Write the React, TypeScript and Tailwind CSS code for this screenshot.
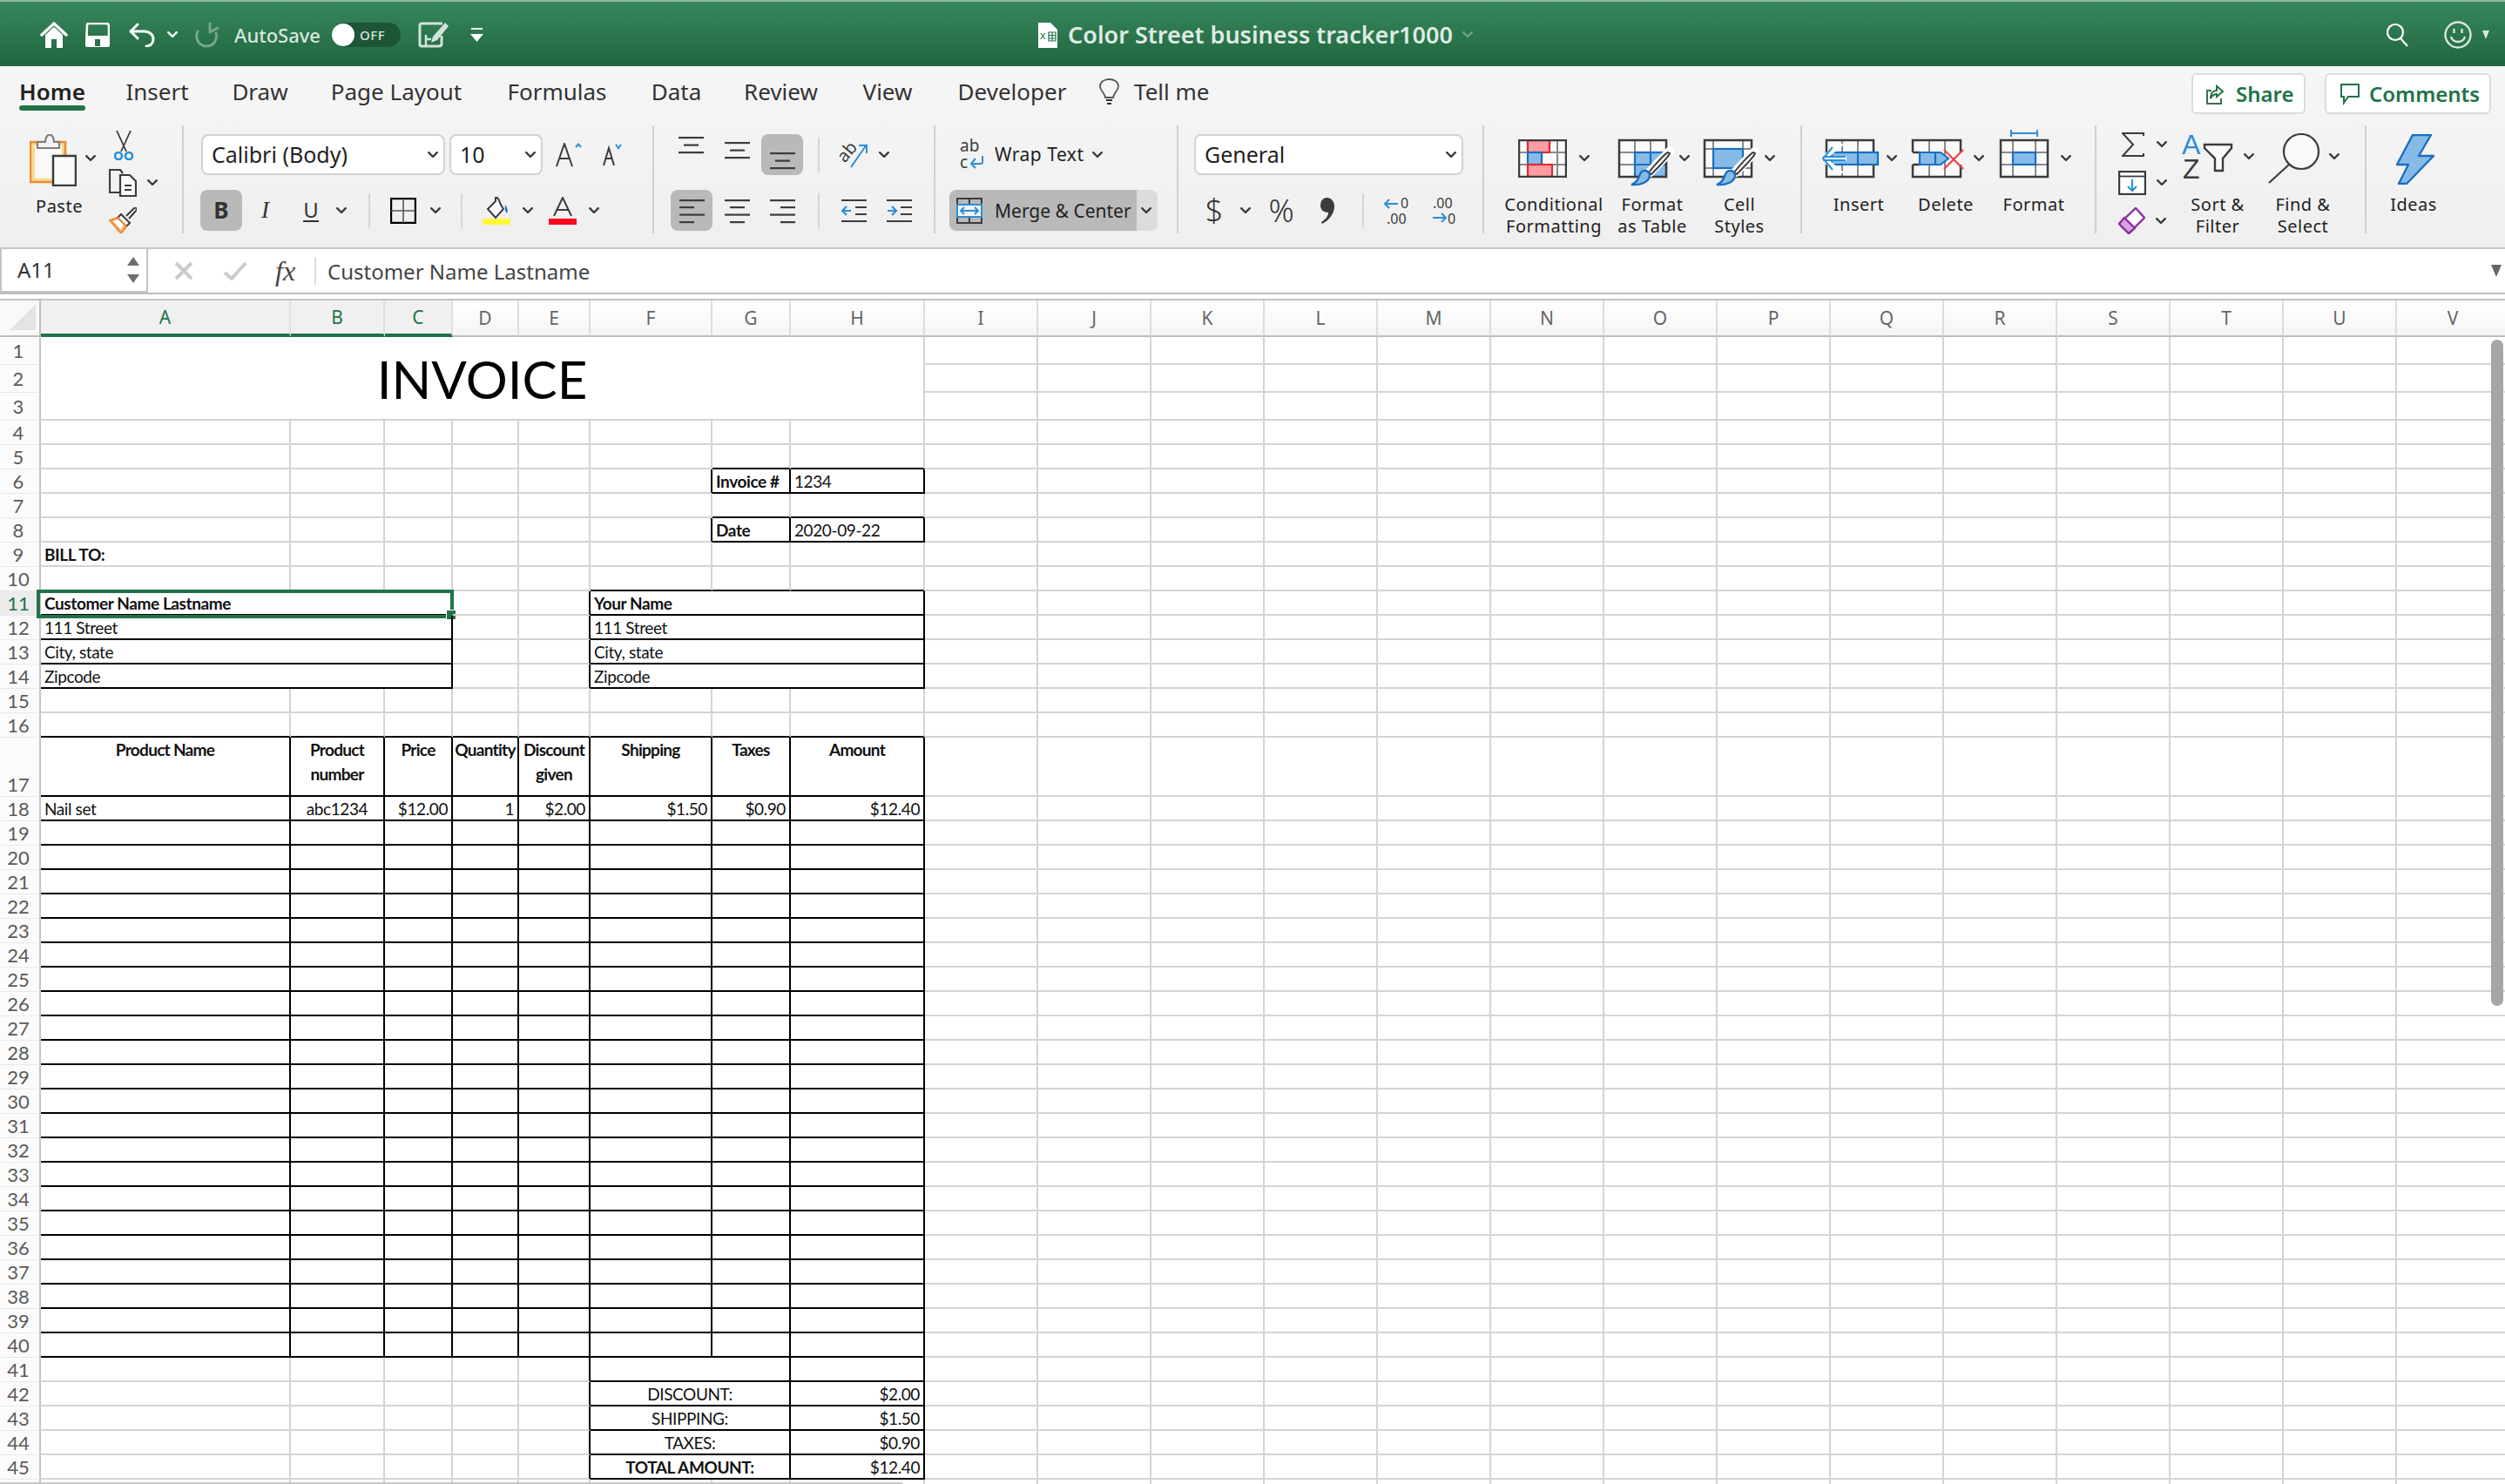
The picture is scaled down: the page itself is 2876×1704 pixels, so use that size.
import React from 'react';

const DARK = '#3c3c3c';
const BLUE = '#1a6fc0';
const LBLUE = '#86bbe8';
const SKY = '#2a8fd8';
const GRAY = '#8a8a8a';

const Chev = ({ className = '', color = DARK }: { className?: string; color?: string }) => (
  <svg viewBox="0 0 12 8" className={`w-[12px] h-[8px] shrink-0 ${className}`}>
    <path d="M1.2 1.2 L6 6 L10.8 1.2" fill="none" stroke={color} strokeWidth="2.4" strokeLinecap="round" strokeLinejoin="round" />
  </svg>
);

const Brush = () => (
  <g>
    <path d="M59 14 L36 38" stroke="#fff" strokeWidth="11" strokeLinecap="round" />
    <path d="M57 15 C54 16 41 30 35 38 L38 40 C45 33 58 20 59 16 Z" fill="#fff" stroke={DARK} strokeWidth="2" />
    <path d="M15 52 C26 53 35 49 36 42 C36 36 29 34 26 38 C23 43 23 49 15 52 Z" fill={LBLUE} stroke={BLUE} strokeWidth="2.4" />
  </g>
);

const Outer = ({ w = 56 }: { w?: number }) => <rect x="1" y="1" width={w - 2} height="42" fill="none" stroke={DARK} strokeWidth="2.5" />;

const CondIcon = () => (
  <svg viewBox="0 0 56 44" className="w-[56px] h-[44px]">
    <rect x="1" y="1" width="54" height="42" fill="#fafafa" />
    <path d="M45 0 V44 M0 15 H56 M0 29 H56 M11 0 V44" stroke={GRAY} strokeWidth="2" />
    <rect x="11" y="1" width="25" height="14" fill="#ff9da5" stroke="#e02b2b" strokeWidth="2.2" />
    <rect x="11" y="15" width="16" height="14" fill={LBLUE} stroke={BLUE} strokeWidth="2.2" />
    <rect x="11" y="29" width="28" height="14" fill="#ff9da5" stroke="#e02b2b" strokeWidth="2.2" />
    <Outer />
  </svg>
);

const TableIcon = () => (
  <svg viewBox="0 0 62 54" className="w-[62px] h-[54px] overflow-visible">
    <rect x="1" y="1" width="54" height="42" fill="#fafafa" />
    <path d="M19 0 V44 M37 0 V44 M0 15 H56 M0 29 H56" stroke={GRAY} strokeWidth="2" />
    <rect x="19" y="15" width="36" height="28" fill={LBLUE} stroke={BLUE} strokeWidth="2.2" />
    <path d="M37 15 V44 M19 29 H56" stroke={BLUE} strokeWidth="2.2" />
    <Outer />
    <Brush />
  </svg>
);

const CellStyleIcon = () => (
  <svg viewBox="0 0 62 54" className="w-[62px] h-[54px] overflow-visible">
    <rect x="1" y="1" width="54" height="42" fill="#fafafa" />
    <path d="M11 0 V44 M45 0 V44 M0 11 H56 M0 33 H56" stroke={GRAY} strokeWidth="2" />
    <rect x="11" y="11" width="34" height="22" fill={LBLUE} stroke={BLUE} strokeWidth="2.2" />
    <Outer />
    <Brush />
  </svg>
);

const InsertIcon = () => (
  <svg viewBox="0 0 62 44" className="w-[62px] h-[44px] overflow-visible">
    <rect x="1" y="1" width="54" height="42" fill="#fafafa" />
    <path d="M19 0 V44 M37 0 V44 M0 15 H56 M0 29 H56" stroke={GRAY} strokeWidth="2" />
    <Outer />
    <rect x="7" y="15" width="53" height="14" fill={LBLUE} stroke={BLUE} strokeWidth="2.2" />
    <path d="M37 15 V29" stroke={BLUE} strokeWidth="2.2" />
    <path d="M-3 22 L14 8 H5 M-3 22 L14 36 H5 M-3 22 H24" fill="none" stroke="#fff" strokeWidth="6" />
    <path d="M8 9 L-3 22 L8 35 M-3 20 H23 M-3 24 H23" fill="none" stroke={SKY} strokeWidth="2" />
  </svg>
);

const DeleteIcon = () => (
  <svg viewBox="0 0 62 44" className="w-[62px] h-[44px] overflow-visible">
    <rect x="1" y="1" width="54" height="42" fill="#fafafa" />
    <path d="M19 0 V44 M37 0 V44" stroke={GRAY} strokeWidth="2" />
    <path d="M0 15 V1 H55 V15 M0 29 V43 H55 V29 M0 15 H8 M0 29 H8" fill="none" stroke={DARK} strokeWidth="2.5" />
    <path d="M8 15 H32 L41 22 L32 29 H8 Z" fill={LBLUE} stroke={BLUE} strokeWidth="2.2" />
    <path d="M26 15 V29" stroke={BLUE} strokeWidth="2.2" />
    <path d="M36 12 L58 34 M58 12 L36 34" stroke="#f04040" strokeWidth="2.2" />
  </svg>
);

const FormatIcon = () => (
  <svg viewBox="0 0 56 44" className="w-[56px] h-[44px] overflow-visible">
    <rect x="1" y="1" width="54" height="42" fill="#fafafa" />
    <path d="M15 0 V44 M41 0 V44 M0 15 H56 M0 29 H56" stroke={GRAY} strokeWidth="2" />
    <rect x="15" y="15" width="26" height="14" fill={LBLUE} stroke={BLUE} strokeWidth="2.2" />
    <Outer />
    <path d="M13 -7 H43 M13 -11 V-3 M43 -11 V-3" stroke={SKY} strokeWidth="2" />
  </svg>
);

const Lines = ({ ys, w = 29, anchor = 'left' }: { ys: number[]; w?: number; anchor?: 'left' | 'center' | 'right' }) => (
  <svg viewBox="0 0 29 30" className="w-[29px] h-[30px]">
    {ys.map((y, i) => {
      const len = i % 2 === 1 ? 17 : w;
      const x = anchor === 'left' ? 0 : anchor === 'right' ? 29 - len : (29 - len) / 2;
      return <rect key={i} x={x} y={y} width={len} height="2.2" fill={DARK} />;
    })}
  </svg>
);

const Sep = () => <div className="w-[2px] h-[40px] bg-[#d6d6d6] shrink-0" />;

const Row = ({ children, className = '' }: { children: React.ReactNode; className?: string }) => (
  <div className={`flex items-center h-[47px] ${className}`}>{children}</div>
);

const Select = ({ label, className }: { label: string; className: string }) => (
  <div className={`h-[47px] bg-white border-2 border-[#d2d2d2] rounded-lg flex items-center justify-between pl-[10px] pr-[6px] text-[25px] text-[#222] shrink-0 ${className}`}>
    <span>{label}</span>
    <Chev />
  </div>
);

const Label = ({ children, className = '' }: { children: React.ReactNode; className?: string }) => (
  <div className={`text-[20px] leading-[25px] text-[#222] tracking-[0.5px] text-center whitespace-nowrap shrink-0 ${className}`}>{children}</div>
);

const TitleBar = () => (
  <div className="h-[76px] bg-gradient-to-b from-[#38875d] to-[#1f663f] border-t-2 border-[#8fb6a0] flex items-center pt-[2px] text-white shrink-0">
    <svg viewBox="0 0 32 30" className="ml-[46px] w-[32px] h-[30px]">
      <path d="M2 15 L16 2 L30 15" fill="none" stroke="#fff" strokeWidth="3.4" strokeLinecap="round" />
      <path d="M6 15 L16 6 L26 15 V30 H19 V20 H13 V30 H6 Z" fill="#fff" />
    </svg>
    <svg viewBox="0 0 28 28" className="ml-[20px] w-[28px] h-[28px]">
      <path d="M2 3 Q2 1 4 1 H24 Q27 1 27 4 V25 Q27 27 25 27 H3 Q1 27 1 25 Z" fill="none" stroke="#fff" strokeWidth="2.6" />
      <path d="M2 15 H26 V27 H2 Z" fill="#fff" />
      <rect x="11" y="19" width="6" height="8" fill="#26704a" />
    </svg>
    <svg viewBox="0 0 30 28" className="ml-[22px] w-[30px] h-[28px]">
      <path d="M10 2 L2 10 L10 18 M2 10 H17 C24 10 28 14 28 19 C28 24 24 27 20 27" fill="none" stroke="#fff" strokeWidth="3" strokeLinecap="round" strokeLinejoin="round" />
    </svg>
    <Chev className="ml-[14px]" color="#fff" />
    <svg viewBox="0 0 30 30" className="ml-[18px] w-[30px] h-[30px]">
      <path d="M5 11 C1 20 7 28 15 28 C23 28 28 21 26 13 M19 2 V12 L28 7" fill="none" stroke="#74a78a" strokeWidth="3" strokeLinejoin="round" strokeLinecap="round" />
    </svg>
    <span className="ml-[17px] w-[99px] text-[22px] font-medium text-[#d9e6df] whitespace-nowrap">AutoSave</span>
    <div className="ml-[13px] w-[79px] h-[28px] rounded-full bg-[#1d5537] flex items-center">
      <div className="w-[26px] h-[26px] rounded-full bg-white" />
      <span className="ml-[6px] text-[15px] font-medium text-[#d9e6df] tracking-[0.5px]">OFF</span>
    </div>
    <svg viewBox="0 0 36 30" className="ml-[20px] w-[36px] h-[30px]">
      <path d="M28 2 H4 Q2 2 2 4 V26 Q2 28 4 28 H24 Q27 28 27 25 V16" fill="none" stroke="#d3e2da" strokeWidth="3" />
      <path d="M9 28 V20 H15 M9 20 V15" fill="none" stroke="#d3e2da" strokeWidth="2.5" />
      <path d="M31 1 L35 5 L22 21 L15 24 L17 17 Z" fill="#d3e2da" />
    </svg>
    <svg viewBox="0 0 15 16" className="ml-[24px] w-[15px] h-[16px]">
      <rect x="1" y="0" width="13" height="2" fill="#fff" />
      <path d="M0 7 H15 L7.5 16 Z" fill="#fff" />
    </svg>
    <svg viewBox="0 0 22 29" className="ml-[637px] w-[22px] h-[29px]">
      <path d="M0 0 H14 L22 8 V29 H0 Z" fill="#fff" />
      <text x="2" y="19" fontSize="13" fill="#1f7146" fontFamily="Liberation Sans">x</text>
      <path d="M12 11 H20 V21 H12 Z M16 11 V21 M12 14.5 H20 M12 18 H20" fill="none" stroke="#1f7146" strokeWidth="1.2" />
    </svg>
    <span className="ml-[12px] w-[443px] text-[27px] font-semibold text-[#dfeae4] whitespace-nowrap">Color Street business tracker1000</span>
    <Chev className="ml-[9px] w-[14px]" color="#6ea487" />
    <svg viewBox="0 0 26 28" className="ml-[1047px] w-[26px] h-[28px]">
      <circle cx="11" cy="11" r="9" fill="none" stroke="#fff" strokeWidth="2.2" />
      <path d="M17 18 L25 27" stroke="#fff" strokeWidth="2.2" />
    </svg>
    <svg viewBox="0 0 32 32" className="ml-[41px] w-[32px] h-[32px]">
      <circle cx="16" cy="16" r="14.5" fill="none" stroke="#d9e6df" strokeWidth="2.4" />
      <path d="M8 18 C10 26 22 26 24 18" fill="none" stroke="#d9e6df" strokeWidth="2.4" />
      <path d="M11.5 9 V14 M20.5 9 V14" stroke="#d9e6df" strokeWidth="2.4" />
    </svg>
    <svg viewBox="0 0 8 10" className="ml-[12px] w-[8px] h-[10px]">
      <path d="M0 0 H8 L4 10 Z" fill="#d9e6df" />
    </svg>
  </div>
);

const TABS = [
  { label: 'Home', cls: 'ml-[23px] w-[74px] font-semibold text-[#222]' },
  { label: 'Insert', cls: 'ml-[48px] w-[71px]' },
  { label: 'Draw', cls: 'ml-[51px] w-[63px]' },
  { label: 'Page Layout', cls: 'ml-[49px] w-[152px]' },
  { label: 'Formulas', cls: 'ml-[52px] w-[113px]' },
  { label: 'Data', cls: 'ml-[52px] w-[57px]' },
  { label: 'Review', cls: 'ml-[48px] w-[87px]' },
  { label: 'View', cls: 'ml-[50px] w-[58px]' },
  { label: 'Developer', cls: 'ml-[51px] w-[126px]' },
];

const TabBar = () => (
  <div className="h-[58px] flex items-center text-[26px] text-[#333] shrink-0">
    {TABS.map((t) => (
      <div key={t.label} className={`relative flex justify-center whitespace-nowrap shrink-0 ${t.cls}`}>
        {t.label}
        {t.label === 'Home' && <span className="absolute left-[-1px] right-[-1px] top-[35px] h-[6px] rounded-full bg-[#217346]" />}
      </div>
    ))}
    <svg viewBox="0 0 23 31" className="ml-[37px] w-[23px] h-[31px] shrink-0">
      <path d="M7 22 C6 16 1 14 1 9 C1 4 6 1 11.5 1 C17 1 22 4 22 9 C22 14 17 16 16 22 Z" fill="none" stroke="#555" strokeWidth="1.8" />
      <path d="M8 25 H15 M9 29 H14" stroke="#333" strokeWidth="2.2" />
    </svg>
    <span className="ml-[17px] w-[87px] whitespace-nowrap shrink-0">Tell me</span>
    <button className="ml-auto mt-[5px] w-[131px] h-[47px] bg-white border-2 border-[#dcdcdc] rounded-md flex items-center pl-[15px] gap-[14px] text-[24px] font-semibold text-[#217346]">
      <svg viewBox="0 0 20 24" className="w-[20px] h-[24px]">
        <path d="M6 8 H1 V23 H17 V17" fill="none" stroke="#3d6e54" strokeWidth="2" />
        <path d="M5 17 C5 10 9 8 12 8 V3 L19 9 L12 15 V12 C9 12 7 13 5 17 Z" fill="none" stroke="#217346" strokeWidth="2" />
      </svg>
      Share
    </button>
    <button className="ml-[22px] mr-[16px] mt-[5px] w-[191px] h-[47px] bg-white border-2 border-[#dcdcdc] rounded-md flex items-center pl-[15px] gap-[10px] text-[24px] font-semibold text-[#217346]">
      <svg viewBox="0 0 24 26" className="w-[24px] h-[26px]">
        <path d="M2 2 H22 V16 H10 L5 23 V16 H2 Z" fill="none" stroke="#217346" strokeWidth="2" />
      </svg>
      Comments
    </button>
  </div>
);

const ClipboardGroup = () => (
  <div className="w-[211px] h-[124px] border-r-2 border-[#d0d0d0] flex shrink-0">
    <div className="ml-[14px] w-[108px] flex flex-col items-center shrink-0">
      <svg viewBox="0 0 54 60" className="mt-[10px] ml-[-14px] w-[54px] h-[60px]">
        <rect x="1" y="9" width="40" height="46" fill="#fbd98e" stroke="#ee8a33" strokeWidth="2.5" />
        <rect x="6" y="13" width="31" height="38" fill="#fafafa" />
        <path d="M9 16 V9 H18 C18 -2 28 -2 28 9 H34 V16 Z" fill="#f4f4f4" stroke="#7d7d7d" strokeWidth="2.2" />
        <rect x="27" y="25" width="26" height="34" fill="#fafafa" stroke={DARK} strokeWidth="2.5" />
      </svg>
      <Label className="mt-[10px]">Paste</Label>
    </div>
    <Chev className="ml-[-24px] mt-[34px]" />
    <div className="ml-[15px] flex flex-col shrink-0">
      <svg viewBox="0 0 22 34" className="mt-[6px] ml-[6px] w-[22px] h-[34px]">
        <path d="M3 0 L14 24 M19 0 L8 24" stroke={DARK} strokeWidth="1.8" />
        <circle cx="5" cy="29" r="4" fill="none" stroke={SKY} strokeWidth="2.6" />
        <circle cx="17" cy="29" r="4" fill="none" stroke={SKY} strokeWidth="2.6" />
      </svg>
      <div className="flex items-center mt-[10px]">
        <svg viewBox="0 0 32 32" className="w-[32px] h-[32px]">
          <path d="M12 27 H1 V1 H13 L16 5" fill="none" stroke={DARK} strokeWidth="2.2" />
          <path d="M13 7 H24 L31 14 V31 H13 Z" fill="#fafafa" stroke={DARK} strokeWidth="2.2" />
          <path d="M18 19 H26 M18 24 H26" stroke={DARK} strokeWidth="2" />
        </svg>
        <Chev className="ml-[12px]" />
      </div>
      <svg viewBox="0 0 32 30" className="mt-[12px] w-[32px] h-[30px]">
        <path d="M20 10 L29 1 C31 -0.5 33 2 31 4 L23 13" fill="#fafafa" stroke={DARK} strokeWidth="2" />
        <path d="M14 8 L24 18 L20 22 L10 12 Z" fill="#fafafa" stroke={DARK} strokeWidth="2" />
        <path d="M10 12 L20 22 L14 30 L1 15 Z" fill="#f6b168" stroke="#ee8a33" strokeWidth="2" />
        <path d="M10 14 L5 16 L14 26 L17 20 Z" fill="#fff" />
      </svg>
    </div>
  </div>
);

const FontGroup = () => (
  <div className="w-[540px] h-[124px] border-r-2 border-[#d0d0d0] shrink-0 pt-[10px]">
    <Row>
      <Select label="Calibri (Body)" className="ml-[20px] w-[280px]" />
      <Select label="10" className="ml-[5px] w-[107px]" />
      <div className="ml-[15px] w-[30px] flex items-start shrink-0">
        <svg viewBox="0 0 30 28" className="w-[30px] h-[28px]">
          <path d="M1 27 L10 1 L19 27 M5 18 H15" fill="none" stroke={DARK} strokeWidth="2" />
          <path d="M23 5 L26 1.5 L29 5" fill="none" stroke={SKY} strokeWidth="2" />
        </svg>
      </div>
      <svg viewBox="0 0 22 26" className="ml-[24px] w-[22px] h-[26px] shrink-0">
        <path d="M1 25 L7 5 L13 25 M3.5 17 H10.5" fill="none" stroke={DARK} strokeWidth="2" />
        <path d="M15 1 L18 5 L21 1" fill="none" stroke={SKY} strokeWidth="2" />
      </svg>
    </Row>
    <Row className="mt-[17px]">
      <div className="ml-[19px] w-[48px] h-[47px] rounded-lg bg-[#b9b9b9] flex items-center justify-center font-bold text-[26px] text-[#333] shrink-0">B</div>
      <span className="ml-[22px] w-[12px] font-['Liberation_Serif',serif] italic text-[27px] text-[#333]">I</span>
      <div className="ml-[36px] w-[18px] flex flex-col items-center text-[24px] leading-[24px] text-[#333] shrink-0">
        U<span className="w-[18px] h-[2px] bg-[#333]" />
      </div>
      <Chev className="ml-[20px]" />
      <div className="ml-[25px]"><Sep /></div>
      <svg viewBox="0 0 30 30" className="ml-[23px] w-[30px] h-[30px] shrink-0">
        <path d="M1 1 H29 V29 H1 Z" fill="none" stroke="#000" strokeWidth="2.4" />
        <path d="M15 1 V29 M1 15 H29" stroke="#555" strokeWidth="1.6" />
      </svg>
      <Chev className="ml-[16px]" />
      <div className="ml-[23px]"><Sep /></div>
      <svg viewBox="0 0 32 32" className="ml-[23px] w-[32px] h-[32px] shrink-0">
        <path d="M15 1 L15 5 L6 14 L15 24 L24 14 Q20 8 19 4 L17 1 Z" fill="#fafafa" stroke={DARK} strokeWidth="2" />
        <path d="M26 9 Q30 15 28 19 Q25 16 26 9 Z" fill={BLUE} />
        <rect x="0" y="25" width="32" height="7" fill="#fff83a" />
      </svg>
      <Chev className="ml-[14px]" />
      <svg viewBox="0 0 32 32" className="ml-[18px] w-[32px] h-[32px] shrink-0">
        <path d="M6 22 L16 1 L26 22 M10 15 H22" fill="none" stroke={DARK} strokeWidth="2" />
        <rect x="0" y="25" width="32" height="7" fill="#f6071b" />
      </svg>
      <Chev className="ml-[14px]" />
    </Row>
  </div>
);

const AlignGroup = () => (
  <div className="w-[323px] h-[124px] border-r-2 border-[#d0d0d0] shrink-0 pt-[10px]">
    <Row>
      <div className="ml-[28px] shrink-0"><div className="mt-[-11px]"><Lines ys={[0, 8.5, 17]} anchor="center" /></div></div>
      <div className="ml-[24px] shrink-0"><div className="mt-[1px]"><Lines ys={[0, 8.5, 17]} anchor="center" /></div></div>
      <div className="ml-[13px] w-[48px] h-[47px] rounded-lg bg-[#b9b9b9] flex justify-center pt-[21px] shrink-0">
        <Lines ys={[0, 8.5, 17]} anchor="center" />
      </div>
      <div className="ml-[17px]"><Sep /></div>
      <svg viewBox="0 0 33 30" className="ml-[23px] w-[33px] h-[30px] shrink-0 overflow-visible">
        <text x="0" y="20" fontSize="20" fill={DARK} fontFamily="Noto Sans" transform="rotate(-50 8 16)">ab</text>
        <path d="M13 29 L31 3 M22 4 H31 V13" fill="none" stroke={SKY} strokeWidth="2" />
      </svg>
      <Chev className="ml-[12px]" />
    </Row>
    <Row className="mt-[17px]">
      <div className="ml-[19px] w-[48px] h-[47px] rounded-lg bg-[#b9b9b9] flex items-center justify-center shrink-0">
        <Lines ys={[2, 10, 18.5, 27]} />
      </div>
      <div className="ml-[14px] shrink-0"><Lines ys={[2, 10, 18.5, 27]} anchor="center" /></div>
      <div className="ml-[23px] shrink-0"><Lines ys={[2, 10, 18.5, 27]} anchor="right" /></div>
      <div className="ml-[26px]"><Sep /></div>
      <svg viewBox="0 0 29 30" className="ml-[25px] w-[29px] h-[30px] shrink-0">
        <path d="M0 3 H29 M16 11 H29 M16 19 H29 M0 27 H29" stroke={DARK} strokeWidth="2.2" />
        <path d="M11 15 H1 M6 10 L1 15 L6 20" fill="none" stroke={SKY} strokeWidth="2.2" />
      </svg>
      <svg viewBox="0 0 29 30" className="ml-[23px] w-[29px] h-[30px] shrink-0">
        <path d="M0 3 H29 M16 11 H29 M16 19 H29 M0 27 H29" stroke={DARK} strokeWidth="2.2" />
        <path d="M1 15 H11 M6 10 L11 15 L6 20" fill="none" stroke={SKY} strokeWidth="2.2" />
      </svg>
    </Row>
  </div>
);

const MergeGroup = () => (
  <div className="w-[279px] h-[124px] border-r-2 border-[#d0d0d0] shrink-0 pt-[10px]">
    <Row>
      <svg viewBox="0 0 28 34" className="ml-[28px] w-[28px] h-[34px] shrink-0 overflow-visible">
        <text x="0" y="13" fontSize="19" fill={DARK} fontFamily="Noto Sans">ab</text>
        <text x="0" y="32" fontSize="19" fill={DARK} fontFamily="Noto Sans">c</text>
        <path d="M26 18 V25 Q26 27 24 27 H14 M18 21 L13 27 L18 32" fill="none" stroke={SKY} strokeWidth="2" />
      </svg>
      <span className="ml-[12px] pt-[1px] w-[101px] text-[21px] text-[#222] tracking-[0.5px] whitespace-nowrap shrink-0">Wrap Text</span>
      <Chev className="ml-[11px]" />
    </Row>
    <Row className="mt-[17px]">
      <div className="ml-[16px] w-[239px] h-[47px] rounded-lg overflow-hidden flex shrink-0">
        <div className="w-[215px] bg-[#b9b9b9] flex items-center pl-[8px] shrink-0">
          <svg viewBox="0 0 30 30" className="w-[30px] h-[30px] shrink-0">
            <path d="M1 1 H29 V8 H1 Z M1 22 H29 V29 H1 Z M15 1 V8 M15 22 V29" fill="none" stroke={DARK} strokeWidth="2" />
            <rect x="1" y="8" width="28" height="14" fill="#f5f5f5" stroke={SKY} strokeWidth="2" />
            <path d="M5 15 H25 M9 11 L5 15 L9 19 M21 11 L25 15 L21 19" fill="none" stroke={SKY} strokeWidth="2" />
          </svg>
          <span className="ml-[14px] pt-[2px] text-[21px] text-[#222] whitespace-nowrap">Merge &amp; Center</span>
        </div>
        <div className="flex-1 bg-[#dcdcdc] flex items-center pl-[5px]"><Chev /></div>
      </div>
    </Row>
  </div>
);

const NumberGroup = () => (
  <div className="w-[351px] h-[124px] border-r-2 border-[#d0d0d0] shrink-0 pt-[10px]">
    <Row>
      <Select label="General" className="ml-[18px] w-[309px]" />
    </Row>
    <Row className="mt-[17px]">
      <span className="ml-[32px] w-[18px] text-[36px] leading-[47px] font-light text-[#333] flex justify-center shrink-0">$</span>
      <Chev className="ml-[21px]" />
      <span className="ml-[20px] w-[30px] text-[36px] leading-[47px] font-light text-[#333] flex justify-center shrink-0">%</span>
      <svg viewBox="0 0 17 30" className="ml-[29px] w-[17px] h-[30px] shrink-0">
        <path d="M8 0 C14 0 17 5 17 10 C17 18 11 26 3 30 L2 28 C7 25 10 21 10 17 C5 17 1 14 1 9 C1 4 4 0 8 0 Z" fill={DARK} />
      </svg>
      <div className="ml-[32px]"><Sep /></div>
      <svg viewBox="0 0 32 32" className="ml-[22px] w-[32px] h-[32px] shrink-0 overflow-visible">
        <text x="20" y="13" fontSize="16" fill={DARK} fontFamily="Noto Sans">0</text>
        <text x="4" y="31" fontSize="16" fill={DARK} fontFamily="Noto Sans">.00</text>
        <path d="M17 8 H2 M7 3 L2 8 L7 13" fill="none" stroke={SKY} strokeWidth="2" />
      </svg>
      <svg viewBox="0 0 27 32" className="ml-[25px] w-[27px] h-[32px] shrink-0 overflow-visible">
        <text x="0" y="13" fontSize="16" fill={DARK} fontFamily="Noto Sans">.00</text>
        <text x="17" y="31" fontSize="16" fill={DARK} fontFamily="Noto Sans">0</text>
        <path d="M0 24 H15 M10 19 L15 24 L10 29" fill="none" stroke={SKY} strokeWidth="2" />
      </svg>
    </Row>
  </div>
);

const StylesGroup = () => (
  <div className="w-[365px] h-[124px] border-r-2 border-[#d0d0d0] shrink-0 pt-[16px] flex flex-col">
    <div className="flex h-[44px] items-start">
      <div className="ml-[39px] shrink-0"><CondIcon /></div>
      <Chev className="ml-[14px] mt-[18px]" />
      <div className="ml-[33px] shrink-0"><TableIcon /></div>
      <Chev className="ml-[8px] mt-[18px]" />
      <div className="ml-[16px] shrink-0"><CellStyleIcon /></div>
      <Chev className="ml-[8px] mt-[18px]" />
    </div>
    <div className="flex mt-[18px]">
      <Label className="ml-[20px] w-[120px]">Conditional<br />Formatting</Label>
      <Label className="ml-[3px] w-[100px]">Format<br />as Table</Label>
      <Label className="ml-[10px] w-[80px]">Cell<br />Styles</Label>
    </div>
  </div>
);

const CellsGroup = () => (
  <div className="w-[338px] h-[124px] border-r-2 border-[#d0d0d0] shrink-0 pt-[16px] flex flex-col">
    <div className="flex h-[44px] items-start">
      <div className="ml-[27px] shrink-0"><InsertIcon /></div>
      <Chev className="ml-[8px] mt-[18px]" />
      <div className="ml-[18px] shrink-0"><DeleteIcon /></div>
      <Chev className="ml-[8px] mt-[18px]" />
      <div className="ml-[18px] shrink-0"><FormatIcon /></div>
      <Chev className="ml-[14px] mt-[18px]" />
    </div>
    <div className="flex mt-[18px]">
      <Label className="ml-[25px] w-[80px]">Insert</Label>
      <Label className="ml-[20px] w-[80px]">Delete</Label>
      <Label className="ml-[21px] w-[80px]">Format</Label>
    </div>
  </div>
);

const EditGroup = () => (
  <div className="w-[310px] h-[124px] border-r-2 border-[#d0d0d0] shrink-0 flex">
    <div className="ml-[25px] w-[62px] flex flex-col shrink-0">
      <div className="flex items-center mt-[8px] h-[28px]">
        <svg viewBox="0 0 26 28" className="ml-[4px] w-[26px] h-[28px]">
          <path d="M25 4 V1 H1 L13 14 L1 27 H25 V24" fill="none" stroke={DARK} strokeWidth="2" />
        </svg>
        <Chev className="ml-[14px]" />
      </div>
      <div className="flex items-center mt-[16px] h-[28px]">
        <svg viewBox="0 0 32 28" className="w-[32px] h-[28px]">
          <rect x="1" y="1" width="30" height="26" fill="#fff" stroke={DARK} strokeWidth="2.4" />
          <path d="M1 6.5 H31" stroke={DARK} strokeWidth="1.8" />
          <path d="M16 10 V23 M11 18 L16 23 L21 18" fill="none" stroke={SKY} strokeWidth="2" />
        </svg>
        <Chev className="ml-[12px]" />
      </div>
      <div className="flex items-center mt-[14px] h-[31px]">
        <svg viewBox="0 0 31 31" className="w-[31px] h-[31px]">
          <path d="M20 1 L30 12 L12 30 L1 19 Z" fill="#fff" stroke="#8e2fa0" strokeWidth="2.4" />
          <path d="M7 12 L19 24 L12 30 L1 19 Z" fill="#d9a4e2" stroke="#8e2fa0" strokeWidth="2.4" />
        </svg>
        <Chev className="ml-[12px]" />
      </div>
    </div>
    <div className="ml-[10px] w-[90px] flex flex-col items-center shrink-0">
      <div className="flex w-[90px] items-start mt-[9px] h-[55px]">
        <svg viewBox="0 0 60 55" className="ml-[2px] w-[60px] h-[55px] shrink-0 overflow-visible">
          <text x="-1" y="24" fontSize="32" fill={SKY} fontFamily="Liberation Sans">A</text>
          <text x="0" y="52" fontSize="32" fill={DARK} fontFamily="Liberation Sans">Z</text>
          <path d="M25 13 H56 V17 L46 29 V43 H37 V29 L25 17 Z" fill="#fafafa" stroke={DARK} strokeWidth="2.4" />
        </svg>
        <Chev className="ml-[10px] mt-[23px]" />
      </div>
      <Label className="mt-[14px] ml-[-6px]">Sort &amp;<br />Filter</Label>
    </div>
    <div className="ml-[2px] w-[90px] flex flex-col shrink-0">
      <div className="flex items-start mt-[9px] h-[55px]">
        <svg viewBox="0 0 60 58" className="ml-[8px] w-[60px] h-[58px] shrink-0">
          <circle cx="38" cy="21" r="20" fill="#fafafa" stroke={DARK} strokeWidth="2.2" />
          <path d="M24 36 L1 57" stroke={DARK} strokeWidth="2.2" />
        </svg>
        <Chev className="ml-[10px] mt-[23px]" />
      </div>
      <Label className="mt-[14px] ml-[6px]">Find &amp;<br />Select</Label>
    </div>
  </div>
);

const IdeasGroup = () => (
  <div className="w-[159px] h-[124px] shrink-0 flex flex-col">
    <svg viewBox="0 0 46 58" className="ml-[33px] mt-[10px] w-[46px] h-[58px]">
      <path d="M20 1 H41 L27 25 H44 L13 57 H4 L15 35 H2 Z" fill={LBLUE} stroke={BLUE} strokeWidth="2.4" strokeLinejoin="round" />
    </svg>
    <Label className="ml-[14px] w-[80px] mt-[10px]">Ideas</Label>
  </div>
);

const Ribbon = () => (
  <div className="h-[210px] bg-gradient-to-b from-[#f6f6f6] to-[#efefef] border-b-2 border-[#c6c6c6] font-['Noto_Sans',sans-serif] shrink-0">
    <TabBar />
    <div className="mt-[10px] flex">
      <ClipboardGroup />
      <FontGroup />
      <AlignGroup />
      <MergeGroup />
      <NumberGroup />
      <StylesGroup />
      <CellsGroup />
      <EditGroup />
      <IdeasGroup />
    </div>
  </div>
);

const FormulaBar = () => (
  <div className="h-[52px] bg-white border-b-2 border-[#bdbdbd] flex items-center font-['Noto_Sans',sans-serif] shrink-0">
    <div className="w-[170px] h-[50px] border-r-2 border-l-2 border-b-2 border-[#c4c4c4] flex items-center justify-between pl-[18px] pr-[8px] text-[24px] text-[#333] shrink-0">
      A11
      <div className="flex flex-col gap-[10px]">
        <svg viewBox="0 0 14 10" className="w-[14px] h-[10px]"><path d="M7 0 L14 10 H0 Z" fill="#6e6e6e" /></svg>
        <svg viewBox="0 0 14 10" className="w-[14px] h-[10px]"><path d="M7 10 L14 0 H0 Z" fill="#6e6e6e" /></svg>
      </div>
    </div>
    <svg viewBox="0 0 22 22" className="ml-[30px] w-[22px] h-[22px] shrink-0">
      <path d="M2 2 L20 20 M20 2 L2 20" stroke="#cbcbcb" strokeWidth="4" />
    </svg>
    <svg viewBox="0 0 28 22" className="ml-[34px] w-[28px] h-[22px] shrink-0">
      <path d="M2 13 L10 20 L26 2" fill="none" stroke="#cbcbcb" strokeWidth="4" />
    </svg>
    <span className="ml-[32px] w-[29px] font-['Liberation_Serif',serif] italic text-[32px] text-[#444] shrink-0">fx</span>
    <div className="ml-[16px] w-[2px] h-[32px] bg-[#dedede] shrink-0" />
    <span className="ml-[13px] pt-[2px] text-[24px] text-[#444]">Customer Name Lastname</span>
    <svg viewBox="0 0 12 14" className="ml-auto mr-[4px] w-[12px] h-[14px] shrink-0">
      <path d="M0 0 H12 L6 14 Z" fill="#666" />
    </svg>
  </div>
);

const COL_WIDTH_GRID =
  'grid grid-cols-[47px_287px_108px_78px_76px_82px_140px_90px_154px_repeat(14,130px)]';
const LETTERS = 'ABCDEFGHIJKLMNOPQRSTUV'.split('');

const ColumnHeaders = () => (
  <div className={`mt-[5px] h-[44px] border-t-2 border-[#c4c4c4] shrink-0 ${COL_WIDTH_GRID}`}>
    <div className="bg-[#f9f9f9] border-b-2 border-r-2 border-[#bdbdbd] flex items-end justify-end pr-[4px] pb-[6px]">
      <svg viewBox="0 0 30 30" className="w-[30px] h-[30px]"><path d="M30 0 V30 H0 Z" fill="#e4e4e4" /></svg>
    </div>
    {LETTERS.map((l, i) => {
      const on = i < 3;
      return (
        <div
          key={l}
          className={`flex items-center justify-center pt-[2px] text-[21px] font-['Noto_Sans',sans-serif] border-r-2 ${
            on
              ? 'bg-[#f0f0f0] text-[#217346] border-b-4 border-b-[#217346] border-r-[#e0e0e0]'
              : 'bg-gradient-to-b from-white to-[#f5f5f5] text-[#666] border-b-2 border-b-[#bdbdbd] border-r-[#dcdcdc]'
          }`}
        >
          {l}
        </div>
      );
    })}
  </div>
);

type Cell = { t?: React.ReactNode; b?: boolean; align?: 'l' | 'c' | 'r'; span?: number; top?: boolean };

const CELLS: Record<string, Cell> = {
  '6:6': { t: 'Invoice #', b: true },
  '6:7': { t: '1234' },
  '8:6': { t: 'Date', b: true },
  '8:7': { t: '2020-09-22' },
  '9:0': { t: 'BILL TO:', b: true },
  '11:0': { t: 'Customer Name Lastname', b: true, span: 3 },
  '12:0': { t: '111 Street', span: 3 },
  '13:0': { t: 'City, state', span: 3 },
  '14:0': { t: 'Zipcode', span: 3 },
  '11:5': { t: 'Your Name', b: true, span: 3 },
  '12:5': { t: '111 Street', span: 3 },
  '13:5': { t: 'City, state', span: 3 },
  '14:5': { t: 'Zipcode', span: 3 },
  '17:0': { t: 'Product Name', b: true, align: 'c', top: true },
  '17:1': { t: <>Product<br />number</>, b: true, align: 'c', top: true },
  '17:2': { t: 'Price', b: true, align: 'c', top: true },
  '17:3': { t: 'Quantity', b: true, align: 'c', top: true },
  '17:4': { t: <>Discount<br />given</>, b: true, align: 'c', top: true },
  '17:5': { t: 'Shipping', b: true, align: 'c', top: true },
  '17:6': { t: 'Taxes', b: true, align: 'c', top: true },
  '17:7': { t: 'Amount', b: true, align: 'c', top: true },
  '18:0': { t: 'Nail set' },
  '18:1': { t: 'abc1234', align: 'c' },
  '18:2': { t: '$12.00', align: 'r' },
  '18:3': { t: '1', align: 'r' },
  '18:4': { t: '$2.00', align: 'r' },
  '18:5': { t: '$1.50', align: 'r' },
  '18:6': { t: '$0.90', align: 'r' },
  '18:7': { t: '$12.40', align: 'r' },
  '41:5': { span: 2 },
  '42:5': { t: 'DISCOUNT:', align: 'c', span: 2 },
  '42:7': { t: '$2.00', align: 'r' },
  '43:5': { t: 'SHIPPING:', align: 'c', span: 2 },
  '43:7': { t: '$1.50', align: 'r' },
  '44:5': { t: 'TAXES:', align: 'c', span: 2 },
  '44:7': { t: '$0.90', align: 'r' },
  '45:5': { t: 'TOTAL AMOUNT:', b: true, align: 'c', span: 2 },
  '45:7': { t: '$12.40', align: 'r' },
};

const SPAN: Record<number, string> = { 1: '', 2: 'col-span-2', 3: 'col-span-3' };

const blackRight = (r: number, c: number) => {
  if (r === 6 || r === 8) return c >= 5 && c <= 7;
  if (r >= 11 && r <= 14) return c === 2 || c === 4 || c === 7;
  if (r >= 17 && r <= 40) return c <= 7;
  if (r >= 41 && r <= 45) return c === 4 || c === 6 || c === 7;
  return false;
};

const blackBottom = (r: number, c: number) => {
  if (r >= 5 && r <= 8) return c === 6 || c === 7;
  if (r >= 10 && r <= 14) return c <= 2 || (c >= 5 && c <= 7);
  if (r >= 16 && r <= 40) return c <= 7;
  if (r >= 41 && r <= 45) return c >= 5 && c <= 7;
  return false;
};

const rowHeight = (r: number) => (r <= 3 ? 'h-[32px]' : r === 17 ? 'h-[68px]' : 'h-[28px]');

const Sheet = () => {
  const out: React.ReactNode[] = [];
  for (let r = 1; r <= 46; r++) {
    const sel = r === 11;
    out.push(
      <div
        key={`h${r}`}
        className={`${rowHeight(r)} flex justify-center pr-[3px] text-[22px] leading-[26px] border-r-2 border-r-[#c4c4c4] border-b border-b-[#e8e8e8] ${
          r === 17 ? 'items-end' : 'items-center'
        } ${sel ? 'bg-[#ececec] text-[#217346]' : 'bg-[#fbfbfb] text-[#5a5a5a]'}`}
      >
        {r < 46 ? r : null}
      </div>
    );
    if (r === 1) {
      out.push(
        <div key="title" className="col-span-8 row-span-3 flex items-center justify-center border-r-2 border-b-2 border-[#d4d4d4] text-[60px] leading-none pt-[2px] text-black">
          INVOICE
        </div>
      );
    }
    for (let c = r <= 3 ? 8 : 0; c < 22; c++) {
      const cell = CELLS[`${r}:${c}`];
      const span = cell?.span ?? 1;
      const last = c + span - 1;
      out.push(
        <div
          key={`${r}:${c}`}
          className={`relative flex min-w-0 border-r-2 border-b-2 px-[4px] whitespace-nowrap text-[19px] text-[#111] ${SPAN[span]} ${
            blackRight(r, last) ? 'border-r-black' : 'border-r-[#d4d4d4]'
          } ${blackBottom(r, c) ? 'border-b-black' : 'border-b-[#d4d4d4]'} ${
            cell?.top ? 'items-start leading-[28px]' : 'items-center leading-[24px] pt-[1px]'
          } ${cell?.align === 'c' ? 'justify-center text-center' : cell?.align === 'r' ? 'justify-end' : 'justify-start'} ${
            cell?.b ? 'font-bold' : ''
          }`}
        >
          {cell?.t && <span className={cell.top ? 'tracking-[-0.7px]' : 'tracking-[-0.4px]'}>{cell.t}</span>}
          {r === 11 && c === 0 && (
            <div className="absolute left-[-5px] top-[-2px] w-[479px] h-[33px] border-4 border-[#217346] pointer-events-none">
              <span className="absolute right-[-7px] bottom-[-6px] w-[12px] h-[12px] bg-[#217346] border border-white" />
            </div>
          )}
        </div>
      );
      c = last;
    }
  }
  return <div className={`font-['Lato',sans-serif] ${COL_WIDTH_GRID}`}>{out}</div>;
};

export default function App() {
  return (
    <div className="relative w-[2876px] h-[1704px] overflow-hidden bg-white flex flex-col font-['Noto_Sans',sans-serif]">
      <TitleBar />
      <Ribbon />
      <FormulaBar />
      <ColumnHeaders />
      <Sheet />
      {/* scrollbars sit on top of the sheet */}
      <div className="absolute right-[2px] top-[390px] w-[14px] h-[765px] rounded-full bg-[#a6a6a6]" />
      <div className="absolute left-0 top-[1702px] w-[1036px] h-[2px] bg-[#c8c8c8]" />
    </div>
  );
}
